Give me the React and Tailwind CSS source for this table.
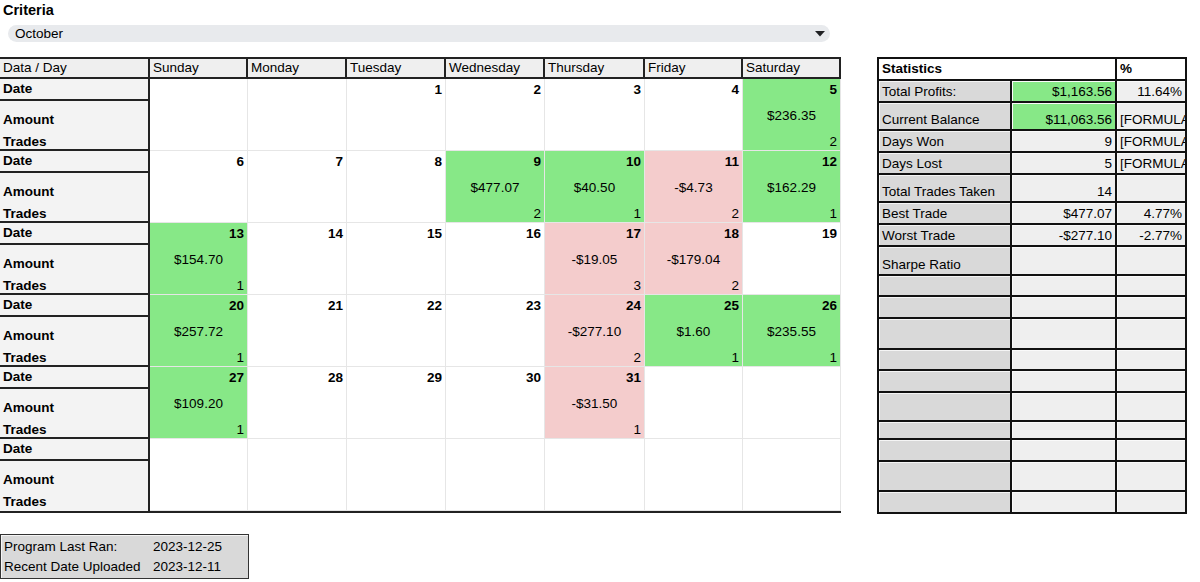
const days = ["Sunday", "Monday", "Tuesday", "Wednesday", "Thursday", "Friday", "Saturday"];

// each cell: [date, amount, trades, tone]
const weeks = [
  [null, null, [1], [2], [3], [4], [5, "$236.35", 2, "win"]],
  [[6], [7], [8], [9, "$477.07", 2, "win"], [10, "$40.50", 1, "win"], [11, "-$4.73", 2, "loss"], [12, "$162.29", 1, "win"]],
  [[13, "$154.70", 1, "win"], [14], [15], [16], [17, "-$19.05", 3, "loss"], [18, "-$179.04", 2, "loss"], [19]],
  [[20, "$257.72", 1, "win"], [21], [22], [23], [24, "-$277.10", 2, "loss"], [25, "$1.60", 1, "win"], [26, "$235.55", 1, "win"]],
  [[27, "$109.20", 1, "win"], [28], [29], [30], [31, "-$31.50", 1, "loss"], null, null],
  [null, null, null, null, null, null, null],
];

const cols = "grid grid-cols-[150px_98px_99px_99px_99px_100px_98px_98px]";

const stats = [
  { label: "Total Profits:", value: "$1,163.56", pct: "11.64%", h: "h-[22px]", green: true },
  { label: "Current Balance", value: "$11,063.56", pct: "[FORMULA]", h: "h-[28px]", green: true, formula: true },
  { label: "Days Won", value: "9", pct: "[FORMULA]", h: "h-[22px]", formula: true },
  { label: "Days Lost", value: "5", pct: "[FORMULA]", h: "h-[22px]", formula: true },
  { label: "Total Trades Taken", value: "14", pct: "", h: "h-[28px]" },
  { label: "Best Trade", value: "$477.07", pct: "4.77%", h: "h-[22px]" },
  { label: "Worst Trade", value: "-$277.10", pct: "-2.77%", h: "h-[22px]" },
  { label: "Sharpe Ratio", value: "", pct: "", h: "h-[29px]" },
  { label: "", h: "h-[21px]" },
  { label: "", h: "h-[22px]" },
  { label: "", h: "h-[31px]" },
  { label: "", h: "h-[21px]" },
  { label: "", h: "h-[22px]" },
  { label: "", h: "h-[29px]" },
  { label: "", h: "h-[18px]" },
  { label: "", h: "h-[22px]" },
  { label: "", h: "h-[30px]" },
  { label: "", h: "h-[22px]" },
];

const DayCell = ({ cell }) => {
  const tone =
    cell && cell[3] === "win" ? "bg-[#87e887]" : cell && cell[3] === "loss" ? "bg-[#f4cccc]" : "bg-white";
  return (
    <div className={`flex flex-col border-r border-b border-[#e6e6e6] ${tone}`}>
      <div className="h-[22px] flex items-center justify-end pr-[3px] font-bold">{cell ? cell[0] : ""}</div>
      <div className="h-[29px] flex items-center justify-center">{cell && cell[1]}</div>
      <div className="h-[20px] flex items-end justify-end pr-[3px] pb-[2px]">{cell && cell[2]}</div>
    </div>
  );
};

const App = () => {
  return (
    <div className="w-[1200px] h-[582px] bg-white text-black text-[13.5px] leading-none font-['Liberation_Sans',Arial,sans-serif] overflow-hidden">
      {/* Criteria + month picker */}
      <div className="h-[20px] pl-[3px] flex items-center font-bold text-[14.5px]">Criteria</div>
      <div className="ml-[8px] mt-[5px] w-[822px] h-[17px] rounded-full bg-[#e8eaed] flex items-center justify-between pl-[7px] pr-[5px]">
        <span>October</span>
        <svg width="10" height="6" viewBox="0 0 10 6">
          <path d="M0 0h10L5 5.5z" fill="#202124" />
        </svg>
      </div>

      <div className="mt-[15px] flex gap-[36px]">
        {/* Calendar */}
        <div className="w-[841px] border-r-2 border-b-2 border-[#222] self-start">
          <div className={`${cols} h-[22px] bg-[#efefef] border-t-2 border-b-2 border-[#222]`}>
            <div className="flex items-center pl-[3px] border-r-2 border-[#222]">Data / Day</div>
            {days.map((d) => (
              <div key={d} className="flex items-center pl-[3px] border-r-2 border-[#222] last:border-r-0">
                {d}
              </div>
            ))}
          </div>
          {weeks.map((week, wi) => (
            <div key={wi} className={cols}>
              <div className="flex flex-col bg-[#f3f3f3] border-r-2 border-[#222] font-bold">
                <div className="h-[22px] flex items-center pl-[3px] border-b-2 border-[#222]">Date</div>
                <div className={`flex-1 flex flex-col pl-[3px] ${wi < 5 ? "border-b-2 border-[#222]" : ""}`}>
                  <div className="h-[29px] flex items-end pb-[4px]">Amount</div>
                  <div className="h-[19px] flex items-end pb-[1px]">Trades</div>
                </div>
              </div>
              {week.map((cell, di) => (
                <DayCell key={di} cell={cell} />
              ))}
            </div>
          ))}
        </div>

        {/* Statistics */}
        <div className="w-[310px] self-start border-l-2 border-t-2 border-r-2 border-[#111]">
          <div className="grid grid-cols-[133px_105px_68px] h-[22px] bg-white border-b-2 border-[#111] font-bold">
            <div className="col-span-2 flex items-center pl-[3px] border-r-2 border-[#111]">Statistics</div>
            <div className="flex items-center pl-[3px]">%</div>
          </div>
          {stats.map((s, i) => (
            <div key={i} className={`grid grid-cols-[133px_105px_68px] ${s.h} border-b-2 border-[#111]`}>
              <div className="bg-[#d9d9d9] border-r-2 border-[#111] shadow-[inset_1px_1px_0_#f5f5f5] flex items-end pb-[3px] pl-[3px]">
                {s.label}
              </div>
              <div
                className={`${s.green ? "bg-[#87e887]" : "bg-[#efefef]"} border-r-2 border-[#111] shadow-[inset_1px_1px_0_#fafafa] flex items-end justify-end pb-[3px] pr-[3px]`}
              >
                {s.value}
              </div>
              <div
                className={`bg-[#efefef] shadow-[inset_1px_1px_0_#fafafa] flex items-end pb-[3px] overflow-hidden whitespace-nowrap ${s.formula ? "justify-start pl-[3px]" : "justify-end pr-[3px]"}`}
              >
                {s.pct}
              </div>
            </div>
          ))}
        </div>
      </div>

      {/* Run info */}
      <div className="mt-[20px] w-[249px] h-[45px] bg-[#d9d9d9] border border-[#333] shadow-[inset_1px_1px_0_#f5f5f5] flex flex-col justify-center">
        <div className="h-[20px] flex items-center">
          <span className="w-[152px] pl-[3px]">Program Last Ran:</span>
          <span>2023-12-25</span>
        </div>
        <div className="h-[20px] flex items-center">
          <span className="w-[152px] pl-[3px]">Recent Date Uploaded</span>
          <span>2023-12-11</span>
        </div>
      </div>
    </div>
  );
};

export default App;
